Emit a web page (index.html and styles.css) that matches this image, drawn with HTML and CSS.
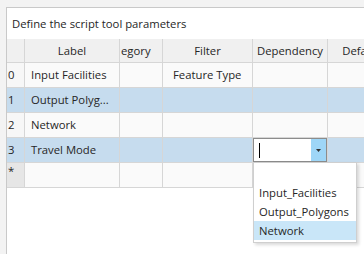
FILE: index.html
```html
<!DOCTYPE html>
<html lang="en">
  <head>
    <meta charset="UTF-8" />
    <title>Script tool parameters</title>
    <link rel="stylesheet" href="styles.css">
  </head>
  <body>
    <section class="panel">
      <h1 class="titel">Define the script tool parameters</h1>

      <div class="grid">
        <div class="hd"></div>
        <div class="hd">Label</div>
        <div class="hd klip">egory</div>
        <div class="hd">Filter</div>
        <div class="hd">Dependency</div>
        <div class="hd">Default</div>

        <div class="nr">0</div>
        <div class="celle">Input Facilities</div>
        <div class="celle"></div>
        <div class="celle filter">Feature Type</div>
        <div class="celle"></div>
        <div class="celle"></div>

        <div class="nr valgt">1</div>
        <div class="celle valgt">Output Polyg...</div>
        <div class="celle valgt"></div>
        <div class="celle valgt"></div>
        <div class="celle valgt"></div>
        <div class="celle valgt"></div>

        <div class="nr">2</div>
        <div class="celle">Network</div>
        <div class="celle"></div>
        <div class="celle"></div>
        <div class="celle"></div>
        <div class="celle"></div>

        <div class="nr valgt">3</div>
        <div class="celle valgt">Travel Mode</div>
        <div class="celle valgt"></div>
        <div class="celle valgt"></div>
        <div class="celle valgt dropcelle">
          <div class="combo">
            <span class="markor"></span>
            <span class="pil">
              <svg width="5" height="3" viewBox="0 0 5 3"><path d="M0 0h5L2.5 3z" fill="#333"/></svg>
            </span>
          </div>
          <ul class="liste">
            <li></li>
            <li>Input_Facilities</li>
            <li>Output_Polygons</li>
            <li class="aktiv">Network</li>
          </ul>
        </div>
        <div class="celle valgt"></div>

        <div class="nr ny">*</div>
        <div class="celle"></div>
        <div class="celle"></div>
        <div class="celle"></div>
        <div class="celle"></div>
        <div class="celle"></div>
      </div>
    </section>
  </body>
</html>
```

FILE: styles.css
```css
* {
  margin: 0;
  padding: 0;
  box-sizing: border-box;
}

body {
  background-color: #f3f3f3;
  font-family: "Open Sans", "Noto Sans", sans-serif;
  font-size: 11.3px;
  color: #262626;
  padding: 7px 0 0 6px;
  overflow: hidden;
  height: 254px;
}

.panel {
  width: 390px;
  height: 260px;
  background-color: #ffffff;
  border: 1px solid #c9c9c9;
}

.titel {
  font-size: 11.3px;
  font-weight: normal;
  height: 31px;
  line-height: 31px;
  padding-left: 5px;
  color: #262626;
}

.grid {
  display: grid;
  grid-template-columns: 17px 94px 42px 89px 74px 1fr;
  grid-template-rows: 23px repeat(5, 24px);
  gap: 1px;
  background-color: #d6d6d6;
  border-bottom: 1px solid #d6d6d6;
}

.hd {
  background-color: #f0f0f0;
  text-align: center;
  line-height: 23px;
  white-space: nowrap;
  overflow: hidden;
}

.klip {
  text-align: left;
  padding-left: 1px;
}

.celle,
.nr {
  background-color: #fafafa;
  line-height: 24px;
  white-space: nowrap;
  overflow: hidden;
}

.celle {
  padding-left: 6px;
}

.filter {
  padding-left: 10px;
}

.nr {
  padding-left: 1px;
  background-color: #f7f7f7;
}

.ny {
  background-color: #e6e6e6;
  line-height: 16px;
}

.valgt {
  background-color: #c6dcee;
}

.dropcelle {
  position: relative;
  overflow: visible;
  padding: 0;
}

.combo {
  display: flex;
  height: 24px;
  background-color: #ffffff;
  border: 1px solid #8c8c8c;
}

.markor {
  flex: 1;
  border-left: 1px solid #000;
  margin: 4px 0 3px 5px;
}

.pil {
  width: 15px;
  background-color: #9ed6f7;
  display: flex;
  align-items: center;
  justify-content: center;
}

.liste {
  list-style: none;
  position: absolute;
  left: 0;
  top: 24px;
  width: 104px;
  background-color: #ffffff;
  border: 1px solid #cfcfcf;
  box-shadow: 2px 2px 3px rgba(0, 0, 0, 0.15);
  padding-bottom: 2px;
  z-index: 2;
}

.liste li {
  height: 19px;
  line-height: 19px;
  padding-left: 5px;
}

.liste li:first-child {
  height: 20px;
}

.aktiv {
  background-color: #c9e6f8;
}
```
